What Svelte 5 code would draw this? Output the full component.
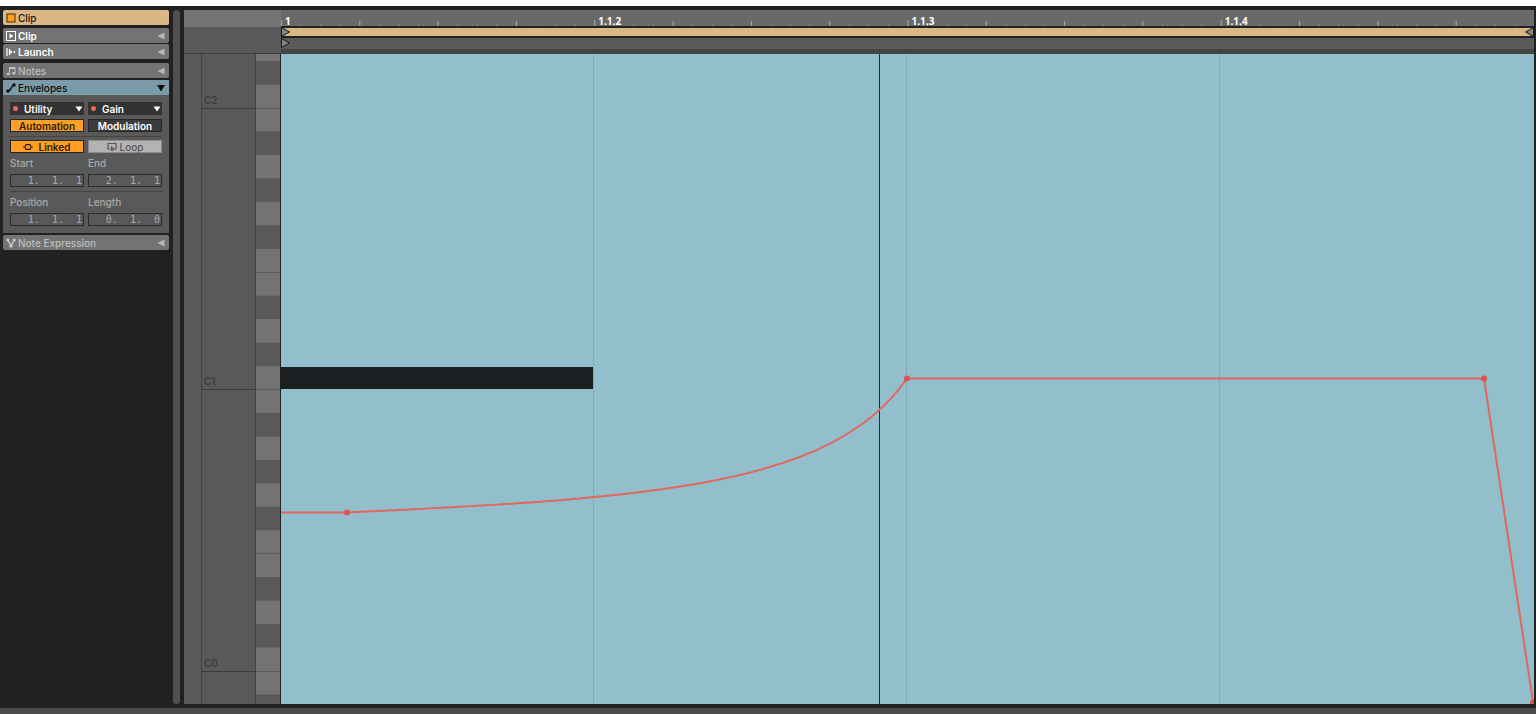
<script lang="ts">
  // Geometry of the note roll
  const OCTAVE = 281.5;
  const KEY = OCTAVE / 12;
  const C2_LINE = 54;
  const ROLL_WIDTH = 1253;
  const ROLL_HEIGHT = 650;

  const blackKeys = [1, 3, 6, 8, 10];
  const octaves = [
    { name: 'C2', y: C2_LINE },
    { name: 'C1', y: C2_LINE + OCTAVE },
    { name: 'C0', y: C2_LINE + OCTAVE * 2 },
    { name: '', y: C2_LINE + OCTAVE * 3 }
  ];

  const beats = ['1', '1.1.2', '1.1.3', '1.1.4'];
  const ticks = Array.from({ length: 64 }, (_, i) => i);

  const points = [
    { x: 66, y: 458 },
    { x: 626, y: 324 },
    { x: 1203, y: 324 },
    { x: 1252, y: 648 }
  ];

  let mode = $state('automation');
  let linked = $state(true);
</script>

{#snippet arrow()}
  <svg class="arrow" viewBox="0 0 8 8" aria-hidden="true"><path d="M7.5 0.5V7.5L0.5 4Z" /></svg>
{/snippet}

<main class="app">
  <aside class="sidebar">
    <div class="panels">
      <h1 class="bar title">
        <svg class="icon" viewBox="0 0 10 10" aria-hidden="true"><rect x="1" y="1" width="8" height="8" fill="#ff9f1a" stroke="#3c2c10" stroke-width="1" /></svg>
        Clip
      </h1>
      <button class="bar clip">
        <svg class="icon" viewBox="0 0 10 10" aria-hidden="true">
          <rect x="0.5" y="0.5" width="9" height="9" fill="none" stroke="#fff" />
          <path d="M3.5 2.5V7.5L7.5 5Z" fill="#fff" />
        </svg>
        Clip {@render arrow()}
      </button>
      <button class="bar launch">
        <svg class="icon" viewBox="0 0 10 10" aria-hidden="true">
          <path d="M1 1V9M3.5 2V8" stroke="#fff" stroke-width="1.2" />
          <path d="M4.2 3V7L6.5 5Z" fill="#fff" />
          <circle cx="8.3" cy="5" r="1" fill="#fff" />
        </svg>
        Launch {@render arrow()}
      </button>
      <button class="bar dim">
        <svg class="icon" viewBox="0 0 10 10" aria-hidden="true">
          <path d="M3.5 7.7V1.5H9V6.9M3.5 2.5H9" fill="none" stroke="#c0c0c0" />
          <ellipse cx="2.3" cy="8" rx="1.7" ry="1.3" fill="#c0c0c0" />
          <ellipse cx="7.8" cy="7.2" rx="1.7" ry="1.3" fill="#c0c0c0" />
        </svg>
        Notes {@render arrow()}
      </button>
      <button class="bar open">
        <svg class="icon" viewBox="0 0 10 10" aria-hidden="true">
          <path d="M2 8L4 7.2L6.2 3.2L8 2" fill="none" stroke="#0b0b0b" stroke-width="1.4" />
          <circle cx="2" cy="8" r="1.7" fill="#0b0b0b" />
          <circle cx="8" cy="2" r="1.7" fill="#0b0b0b" />
        </svg>
        Envelopes
        <svg class="arrow" viewBox="0 0 8 8" aria-hidden="true"><path d="M0 1H8L4 7.5Z" /></svg>
      </button>

      <div class="envelopes">
        <div class="pair">
          <div class="chooser">
            <select aria-label="Device"><option>Utility</option></select>
            <svg viewBox="0 0 8 6" aria-hidden="true"><path d="M0.5 0.5H7.5L4 5.5Z" /></svg>
          </div>
          <div class="chooser">
            <select aria-label="Parameter"><option>Gain</option></select>
            <svg viewBox="0 0 8 6" aria-hidden="true"><path d="M0.5 0.5H7.5L4 5.5Z" /></svg>
          </div>
        </div>
        <div class="pair modes">
          <button class="toggle" class:on={mode === 'automation'} onclick={() => (mode = 'automation')}>Automation</button>
          <button class="toggle" class:on={mode === 'modulation'} onclick={() => (mode = 'modulation')}>Modulation</button>
        </div>
        <hr />
        <div class="pair">
          <button class="toggle" class:on={linked} onclick={() => (linked = !linked)}>
            <svg width="10" height="8" viewBox="0 0 10 8" aria-hidden="true"><path d="M0 4H2M8 4H10M3 1.7H7L8.2 4L7 6.3H3L1.8 4Z" /></svg>
            Linked
          </button>
          <button class="toggle loop">
            <svg width="10" height="9" viewBox="0 0 10 9" aria-hidden="true"><path d="M3 7H1V1.5H9V7H7M4.5 5V9L7 7Z" /></svg>
            Loop
          </button>
        </div>
        <div class="pair fields">
          <label>Start <input value="1.  1.  1" /></label>
          <label>End <input value="2.  1.  1" /></label>
        </div>
        <hr />
        <div class="pair fields">
          <label>Position <input value="1.  1.  1" /></label>
          <label>Length <input value="0.  1.  0" /></label>
        </div>
      </div>

      <button class="bar dim last">
        <svg class="icon" viewBox="0 0 10 10" aria-hidden="true">
          <path d="M2 2L5 8L8 2" fill="none" stroke="#ccc" stroke-width="1.3" />
          <circle cx="1.8" cy="2" r="1.5" fill="#ccc" />
          <circle cx="8.2" cy="2" r="1.5" fill="#ccc" />
          <circle cx="5" cy="8" r="1.6" fill="#ccc" />
        </svg>
        Note Expression {@render arrow()}
      </button>
    </div>
    <div class="scrollbar"></div>
  </aside>

  <section class="editor">
    <div class="corner"></div>

    <header class="timeline">
      <div class="ruler">
        <svg class="ticks" aria-hidden="true">
          {#each ticks as i}
            <rect x="{(i / 64) * 100}%" y={i % 16 === 0 ? 10 : i % 4 === 0 ? 11 : 15} width="1" height="6" />
          {/each}
        </svg>
        {#each beats as beat}
          <span>{beat}</span>
        {/each}
      </div>
      <div class="loop-brace">
        <svg width="10" height="10" viewBox="0 0 10 10" aria-hidden="true"><path d="M0.5 0.5L8.5 5L0.5 9.5Z" /></svg>
        <svg width="9" height="10" viewBox="0 0 9 10" aria-hidden="true"><path d="M8.5 0.5L0.5 5L8.5 9.5Z" /></svg>
      </div>
      <div class="markers">
        <svg width="10" height="10" viewBox="0 0 10 10" aria-hidden="true"><path d="M0.5 0.5L8.5 5L0.5 9.5Z" /></svg>
      </div>
    </header>

    <svg class="keyboard" aria-label="Piano keys">
      <rect x="72" width="24" height="100%" fill="#737373" />
      {#each octaves as octave}
        {#each blackKeys as key}
          <rect x="72" y={octave.y - (key + 1) * KEY} width="24" height={KEY} fill="#595959" />
        {/each}
        <rect x="72" y={Math.floor(octave.y - 5 * KEY)} width="24" height="1" fill="#5f5f5f" />
        <rect x="17" y={Math.floor(octave.y)} width="55" height="1" fill="#3c3c3c" />
        <rect x="72" y={Math.floor(octave.y)} width="24" height="1" fill="#5f5f5f" />
        {#if octave.name}
          <text x="20" y={Math.floor(octave.y) - 4}>{octave.name}</text>
        {/if}
      {/each}
      <rect x="17" width="1" height="100%" fill="#424242" />
      <rect x="71" width="1" height="100%" fill="#424242" />
    </svg>

    <svg class="roll" viewBox="0 0 {ROLL_WIDTH} {ROLL_HEIGHT}" preserveAspectRatio="none" aria-label="Gain envelope">
      {#each [1, 2, 3] as beat}
        <path class="grid" d="M{Math.floor((ROLL_WIDTH / 4) * beat) - 0.5} 0V650" />
      {/each}
      <rect x="0" y="313" width="312" height="22" fill="#1a2022" />
      <path class="playhead" d="M598.5 0V650" />
      <path class="curve" d="M0 458.5H66C380 444 552 431 626 324.5H1203L1252 648" />
      {#each points as point}
        <path class="point" d="M{point.x} {point.y + 0.5}h0.01" />
      {/each}
    </svg>
  </section>
</main>

<style>
  :global(body) {
    background: #fff;
  }

  .app {
    box-sizing: border-box;
    display: flex;
    height: 100vh;
    padding-top: 4px;
    border-top: 6px solid #fff;
    border-bottom: 6px solid #4d4b4d;
    background: #212121;
    font-family: Inter, 'Liberation Sans', sans-serif;
    font-size: 10px;
    font-weight: 500;
  }

  button,
  input,
  select {
    font: inherit;
    color: inherit;
    margin: 0;
    border-radius: 0;
  }

  .sidebar {
    display: flex;
    gap: 4px;
    flex: none;
    padding: 0 4px 4px 3px;
  }

  .panels {
    width: 166px;
  }

  .scrollbar {
    width: 7px;
    border-radius: 4px;
    background: #505050;
  }

  .bar {
    box-sizing: border-box;
    display: flex;
    align-items: center;
    gap: 2px;
    width: 100%;
    height: 15px;
    margin: 0 0 2px;
    padding: 0 4px 0 3px;
    border: 0;
    border-radius: 2px;
    background: #737373;
    color: #fff;
    text-align: left;
    font-weight: 600;
  }

  .title {
    margin-bottom: 3px;
    background: #dab785;
    color: #1c1408;
    font-size: 10px;
    font-weight: 500;
  }

  .clip {
    margin-bottom: 1px;
  }

  .launch {
    margin-bottom: 4px;
  }

  .dim {
    color: #bdbdbd;
    font-weight: 500;
  }

  .open {
    margin-bottom: 0;
    border-radius: 0;
    background: #7c9ba8;
    color: #0b0b0b;
    font-weight: 500;
  }

  .last {
    margin-top: 2px;
  }

  .icon {
    flex: none;
    width: 10px;
    height: 10px;
  }

  .arrow {
    width: 8px;
    height: 8px;
    margin-left: auto;
    fill: #b8b8b8;
  }

  .open .arrow {
    fill: #0b0b0b;
  }

  .envelopes {
    padding: 7px;
    background: #595959;
    color: #aaa;
  }

  .pair {
    display: grid;
    grid-template-columns: 1fr 1fr;
    gap: 4px;
  }

  .modes {
    margin-top: 4px;
  }

  hr {
    margin: 4px 0 3px;
    border: 0;
    border-top: 1px solid #454545;
  }

  .chooser {
    position: relative;
    height: 13px;
    background: #323232;
    color: #fff;
  }

  .chooser::before {
    content: '';
    position: absolute;
    top: 4px;
    left: 3px;
    width: 5px;
    height: 5px;
    border-radius: 50%;
    background: #ec6a5a;
  }

  .chooser svg {
    position: absolute;
    top: 4px;
    right: 1px;
    width: 8px;
    height: 6px;
    fill: #fff;
    pointer-events: none;
  }

  select {
    display: block;
    width: 100%;
    height: 13px;
    padding: 0 12px 0 14px;
    border: 0;
    background: none;
    appearance: none;
    font-weight: 600;
  }

  .toggle {
    display: flex;
    align-items: center;
    justify-content: center;
    gap: 5px;
    height: 13px;
    padding: 0;
    border: 1px solid #262626;
    background: #3c3c3c;
    color: #fff;
    font-weight: 600;
  }

  .toggle.on {
    background: #ff9f24;
    color: #2b1a05;
  }

  .toggle.loop {
    gap: 3px;
    border-color: #8c8c8c;
    background: #b3b3b3;
    color: #555;
    font-weight: 500;
  }

  .toggle svg {
    fill: none;
    stroke: currentColor;
    stroke-width: 1.2;
  }

  .fields {
    margin-top: 4px;
    line-height: 13px;
  }

  input {
    box-sizing: border-box;
    display: block;
    width: 100%;
    height: 13px;
    margin-top: 4px;
    padding: 0 1px;
    border: 1px solid #2c2c2c;
    background: #595959;
    color: #aaa;
    font-family: 'DejaVu Sans Mono', monospace;
    font-size: 10px;
    text-align: right;
  }

  .editor {
    display: grid;
    flex: 1;
    min-width: 0;
    grid-template-columns: 97px 1fr;
    grid-template-rows: 44px 1fr;
    padding: 0 2px 4px 0;
  }

  .corner {
    box-sizing: border-box;
    border-top: 17px solid #747474;
    border-bottom: 1px solid #3e3e3e;
    background: #595959;
  }

  .ruler {
    position: relative;
    display: grid;
    grid-template-columns: repeat(4, 1fr);
    height: 16px;
    background: #696969;
    color: #fff;
    font-family: 'Open Sans', sans-serif;
    font-weight: 700;
    line-height: 22px;
  }

  .ruler span {
    padding-left: 4px;
  }

  .ticks {
    position: absolute;
    width: 100%;
    height: 16px;
    fill: #aaa;
  }

  .loop-brace {
    box-sizing: border-box;
    display: flex;
    align-items: center;
    justify-content: space-between;
    height: 12px;
    border: solid #222;
    border-width: 2px 0;
    background: #dab785;
  }

  .markers {
    box-sizing: border-box;
    height: 16px;
    border-bottom: 5px solid #444;
    background: #5a5a5a;
  }

  .loop-brace svg,
  .markers svg {
    display: block;
    fill: #858585;
    stroke: #161616;
  }

  .keyboard {
    box-sizing: border-box;
    width: 97px;
    height: 100%;
    border-right: 1px solid #222;
    background: #595959;
  }

  .keyboard text {
    fill: #383838;
    font-size: 10px;
  }

  .roll {
    width: 100%;
    height: 100%;
    background: #92bfcb;
  }

  .roll path {
    fill: none;
    vector-effect: non-scaling-stroke;
  }

  .grid {
    stroke: #80acb8;
  }

  .playhead {
    stroke: #1e3035;
  }

  .curve {
    stroke: #e0685f;
    stroke-width: 2;
  }

  .point {
    stroke: #d9574f;
    stroke-width: 6;
    stroke-linecap: round;
  }
</style>
